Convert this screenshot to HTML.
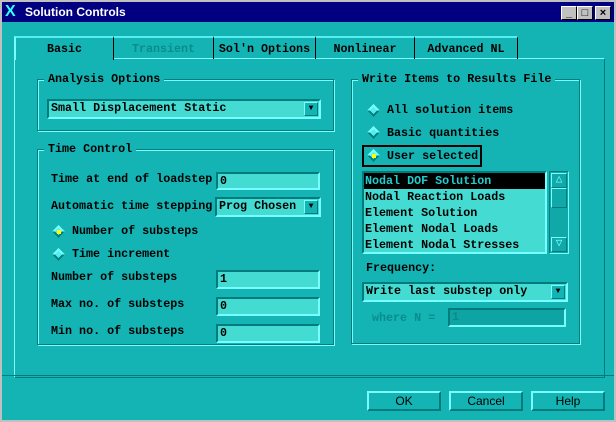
<!DOCTYPE html><html><head><style>
*{margin:0;padding:0;box-sizing:border-box}
body{width:616px;height:422px;background:#c0c0c0;position:relative;overflow:hidden;font-family:"Liberation Mono",monospace;font-weight:bold;font-size:11.7px;color:#000}
.a{position:absolute}
.win{left:2px;top:22px;width:612px;height:398px;background:#14b4b4}
.title{left:2px;top:2px;width:612px;height:20px;background:#000080;color:#fff;font-family:"Liberation Sans",sans-serif;font-weight:bold;font-size:12px;line-height:20px;padding-left:23px}
.tb{top:6px;width:16px;height:14px;background:#c0c0c0;border:1px solid;border-color:#fff #000 #000 #fff;font:bold 11px "Liberation Sans";text-align:center;line-height:12px;color:#000}
.grp{border:1px solid #007c7c;box-shadow:inset 1px 1px 0 #7ff,1px 1px 0 #7ff}
.gl{background:#14b4b4;padding:0 4px;top:-8px;left:6px;white-space:nowrap}
.fld{background:#44dcd2;border:2px solid;border-color:#007c7c #7ff #7ff #007c7c;padding-left:2px;line-height:14px;white-space:nowrap;overflow:hidden}
.dd{position:absolute;right:1px;top:1px;width:14px;height:14px;background:#14b4b4;border:1px solid;border-color:#7ff #007c7c #007c7c #7ff;font-size:8px;line-height:12px;text-align:center}
.tab{top:36px;height:23px;border-top:2px solid #5ee;border-right:1px solid #000;line-height:22px;text-align:center}
.btn{top:391px;width:74px;height:20px;border:2px solid;border-color:#7ff #007c7c #007c7c #7ff;font-family:"Liberation Sans Narrow","Liberation Sans",sans-serif;font-weight:normal;font-size:12px;text-align:center;line-height:16px}
.rad{width:9px;height:9px;transform:rotate(45deg);background:#5ee;border:2px solid;border-color:#7ff #007c7c #007c7c #7ff}
.t{white-space:nowrap}
</style></head><body>
<div class="a title">Solution Controls</div>
<div class="a" style="left:5px;top:5px;color:#3ff;font:bold 16px 'Liberation Sans';line-height:14px">X</div>
<div class="a tb" style="left:561px">_</div>
<div class="a tb" style="left:577px">□</div>
<div class="a tb" style="left:595px">×</div>
<div class="a win"></div>
<div class="a" style="left:14px;top:58px;width:591px;height:320px;border:1px solid;border-color:#7ff #007c7c #007c7c #7ff"></div>
<div class="a tab" style="left:14px;width:100px;height:24px;border-left:2px solid #7ff;background:#14b4b4">Basic</div>
<div class="a tab" style="left:114px;width:100px;color:#0a8c8c">Transient</div>
<div class="a tab" style="left:214px;width:102px">Sol'n Options</div>
<div class="a tab" style="left:316px;width:99px">Nonlinear</div>
<div class="a tab" style="left:415px;width:103px">Advanced NL</div>

<div class="a grp" style="left:37px;top:79px;width:297px;height:52px"><div class="a gl">Analysis Options</div></div>
<div class="a fld" style="left:47px;top:99px;width:274px;height:20px">Small Displacement Static<div class="dd">▼</div></div>

<div class="a grp" style="left:37px;top:149px;width:297px;height:196px"><div class="a gl">Time Control</div></div>
<div class="a t" style="left:51px;top:172px">Time at end of loadstep</div>
<div class="a fld" style="left:216px;top:172px;width:104px;height:18px">0</div>
<div class="a t" style="left:51px;top:199px">Automatic time stepping</div>
<div class="a fld" style="left:215px;top:197px;width:106px;height:20px">Prog Chosen<div class="dd">▼</div></div>
<div class="a rad" style="left:54px;top:227px"></div><div class="a" style="left:57px;top:230px;width:4px;height:4px;background:#ff0"></div>
<div class="a t" style="left:72px;top:224px">Number of substeps</div>
<div class="a rad" style="left:54px;top:250px"></div>
<div class="a t" style="left:72px;top:247px">Time increment</div>
<div class="a t" style="left:51px;top:270px">Number of substeps</div>
<div class="a fld" style="left:216px;top:270px;width:104px;height:19px">1</div>
<div class="a t" style="left:51px;top:297px">Max no. of substeps</div>
<div class="a fld" style="left:216px;top:297px;width:104px;height:19px">0</div>
<div class="a t" style="left:51px;top:324px">Min no. of substeps</div>
<div class="a fld" style="left:216px;top:324px;width:104px;height:19px">0</div>

<div class="a grp" style="left:351px;top:79px;width:229px;height:265px"><div class="a gl">Write Items to Results File</div></div>
<div class="a rad" style="left:369px;top:106px"></div><div class="a t" style="left:387px;top:103px">All solution items</div>
<div class="a rad" style="left:369px;top:128px"></div><div class="a t" style="left:387px;top:126px">Basic quantities</div>
<div class="a" style="left:362px;top:145px;width:120px;height:22px;border:2px solid #000"></div>
<div class="a rad" style="left:369px;top:151px"></div><div class="a" style="left:372px;top:154px;width:4px;height:4px;background:#ff0"></div>
<div class="a t" style="left:387px;top:149px">User selected</div>
<div class="a fld" style="left:362px;top:171px;width:185px;height:83px;padding:0;line-height:16px">
<div style="background:#000;color:#2cc;padding-left:1px">Nodal DOF Solution</div>
<div style="padding-left:1px">Nodal Reaction Loads</div>
<div style="padding-left:1px">Element Solution</div>
<div style="padding-left:1px">Element Nodal Loads</div>
<div style="padding-left:1px">Element Nodal Stresses</div></div>
<div class="a" style="left:549px;top:171px;width:20px;height:83px;background:#10a8a8;border:1px solid;border-color:#007c7c #7ff #7ff #007c7c"></div>
<div class="a" style="left:551px;top:173px;width:16px;height:15px;border:1px solid;border-color:#7ff #007c7c #007c7c #7ff;color:#7ff;font-size:11px;text-align:center;line-height:13px;font-weight:normal">△</div>
<div class="a" style="left:551px;top:188px;width:16px;height:20px;border:1px solid;border-color:#7ff #007c7c #007c7c #7ff"></div>
<div class="a" style="left:551px;top:237px;width:16px;height:15px;border:1px solid;border-color:#7ff #007c7c #007c7c #7ff;color:#7ff;font-size:11px;text-align:center;line-height:13px;font-weight:normal">▽</div>
<div class="a t" style="left:366px;top:261px">Frequency:</div>
<div class="a fld" style="left:362px;top:282px;width:206px;height:20px">Write last substep only<div class="dd">▼</div></div>
<div class="a t" style="left:372px;top:311px;color:#0a8c8c">where N =</div>
<div class="a fld" style="left:448px;top:308px;width:118px;height:19px;background:#0fa4a4;color:#0a8c8c">1</div>

<div class="a" style="left:2px;top:375px;width:612px;height:1px;background:#007c7c"></div>
<div class="a btn" style="left:367px">OK</div>
<div class="a btn" style="left:449px">Cancel</div>
<div class="a btn" style="left:531px">Help</div>
</body></html>
